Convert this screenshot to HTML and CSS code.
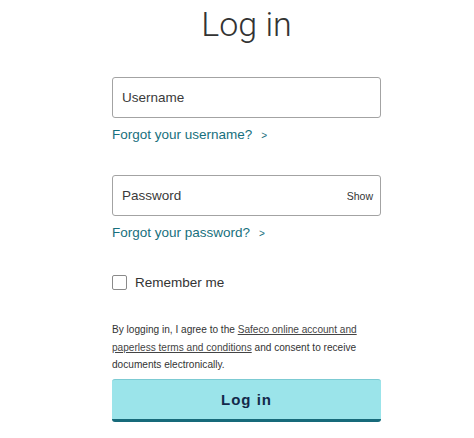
FILE: index.html
```html
<!DOCTYPE html>
<html>
<head>
<meta charset="utf-8">
<link rel="stylesheet" href="styles.css">
</head>
<body>
<main class="login">
  <h1 class="title">Log in</h1>
  <div class="field">
    <span class="placeholder">Username</span>
  </div>
  <a class="link link-user" href="#">Forgot your username?<span class="chev">&gt;</span></a>
  <div class="field field-pw">
    <span class="placeholder">Password</span>
    <span class="show">Show</span>
  </div>
  <a class="link link-pw" href="#">Forgot your password?<span class="chev">&gt;</span></a>
  <label class="remember"><span class="box"></span>Remember me</label>
  <p class="terms">By logging in, I agree to the <a href="#">Safeco online account and</a> <a href="#">paperless terms and conditions</a> and consent to receive documents electronically.</p>
  <button class="submit">Log in</button>
</main>
</body>
</html>
```
FILE: styles.css
```css
html, body {
  margin: 0;
  padding: 0;
  background: #ffffff;
}
body {
  font-family: "Liberation Sans", Arial, sans-serif;
  color: #333;
}
.login {
  width: 269px;
  margin-left: 112px;
  display: flex;
  flex-direction: column;
}
.title {
  margin: 4px 0 0 0;
  font-family: Roboto, "Liberation Sans", sans-serif;
  font-weight: 300;
  font-size: 34px;
  line-height: 40px;
  text-align: center;
  color: #333;
}
.field {
  margin-top: 33px;
  height: 39px;
  border: 1px solid #a3a3a3;
  border-radius: 3px;
  display: flex;
  align-items: center;
  justify-content: space-between;
  padding: 0 7px 0 9px;
}
.placeholder {
  font-size: 13.5px;
  color: #3a3a3a;
}
.show {
  font-size: 10.5px;
  color: #333;
}
.field-pw {
  margin-top: 31px;
}
.link {
  margin-top: 8px;
  font-size: 13.5px;
  line-height: 17px;
  color: #17707d;
  text-decoration: none;
}
.chev {
  display: inline-block;
  margin-left: 9px;
  font-size: 10px;
  color: #17707d;
}
.remember {
  margin-top: 33px;
  display: flex;
  align-items: center;
  font-size: 13.5px;
  color: #333;
}
.box {
  width: 13px;
  height: 13px;
  border: 1px solid #8a8a8a;
  border-radius: 2px;
  margin-right: 8px;
}
.terms {
  margin: 31px 0 0 0;
  font-size: 10.1px;
  line-height: 17.5px;
  color: #333;
}
.terms a {
  color: #444;
  text-decoration: underline;
}
.submit {
  margin-top: 5px;
  height: 43px;
  border: none;
  border-bottom: 3px solid #176a7a;
  border-top: 1px solid #7ccbd3;
  border-radius: 3px;
  background: #9be4ea;
  font-family: "Liberation Sans", Arial, sans-serif;
  font-weight: 700;
  font-size: 15px;
  letter-spacing: 1px;
  color: #13294b;
  padding: 0;
}
```
